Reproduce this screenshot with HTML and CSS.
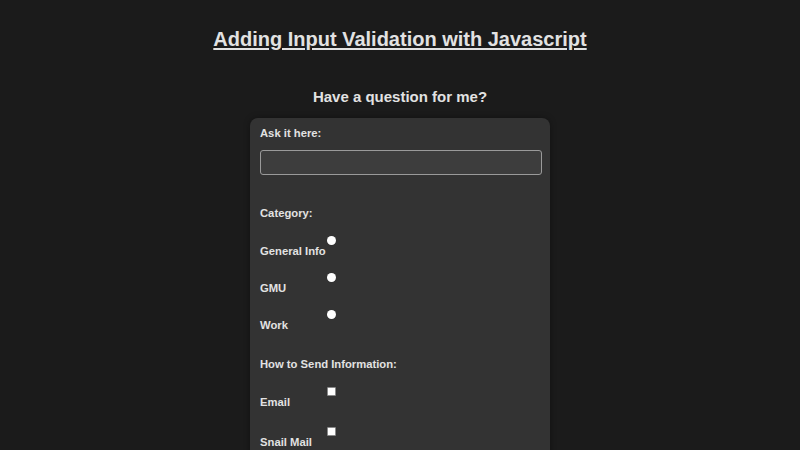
FILE: index.html
```html
<!DOCTYPE html>
<html lang="en">
<head>
<meta charset="utf-8">
<title>Adding Input Validation with Javascript</title>
<link rel="stylesheet" href="styles.css">
</head>
<body>
<header class="page-head">
  <h1 class="title">Adding Input Validation with Javascript</h1>
  <h2 class="subtitle">Have a question for me?</h2>
</header>
<form class="card">
  <label class="field-label" for="q">Ask it here:</label>
  <input class="text-input" id="q" type="text">

  <p class="group-label">Category:</p>
  <div class="option"><label for="c1">General Info</label><input class="radio" type="radio" name="cat" id="c1"></div>
  <div class="option"><label for="c2">GMU</label><input class="radio" type="radio" name="cat" id="c2"></div>
  <div class="option"><label for="c3">Work</label><input class="radio" type="radio" name="cat" id="c3"></div>

  <p class="group-label send">How to Send Information:</p>
  <div class="option check"><label for="s1">Email</label><input class="checkbox" type="checkbox" id="s1"></div>
  <div class="option check"><label for="s2">Snail Mail</label><input class="checkbox" type="checkbox" id="s2"></div>
</form>
</body>
</html>
```
FILE: styles.css
```css
html, body {
  margin: 0;
  padding: 0;
  background: #1b1b1b;
  color: #e2e2e2;
  font-family: "Liberation Sans", Arial, sans-serif;
  font-weight: bold;
}

body {
  display: flex;
  flex-direction: column;
  align-items: center;
  padding-top: 28px;
}

.page-head {
  display: flex;
  flex-direction: column;
  align-items: center;
}

.title {
  margin: 0;
  font-size: 20px;
  line-height: 23px;
  text-decoration: underline;
  text-decoration-thickness: 2px;
  text-underline-offset: 2px;
}

.subtitle {
  margin: 37px 0 0;
  font-size: 15px;
  line-height: 17px;
}

.card {
  margin-top: 13px;
  width: 280px;
  padding: 9px 10px 20px;
  background: #333333;
  border-radius: 8px;
  box-shadow: 0 0 6px rgba(0, 0, 0, 0.35);
  display: flex;
  flex-direction: column;
  align-items: flex-start;
  font-size: 11.25px;
  line-height: 13px;
}

.field-label {
  display: block;
}

.text-input {
  margin: 10px 0 0;
  width: 100%;
  height: 23px;
  padding: 0;
  border: 1px solid #9a9a9a;
  border-radius: 3px;
  background: #3d3d3d;
  color: #e2e2e2;
  box-sizing: content-box;
}

.group-label {
  margin: 32px 0 15.5px;
}

.group-label.send {
  margin: 10.6px 0 16.5px;
}

.option {
  display: flex;
  align-items: flex-start;
  margin-bottom: 15.3px;
}

.option label {
  width: 67px;
  padding-top: 9px;
}

.option.check {
  margin-bottom: 17.5px;
}

.radio, .checkbox {
  appearance: none;
  -webkit-appearance: none;
  margin: 0;
  width: 9px;
  height: 9px;
  background: #ffffff;
  border: none;
}

.radio {
  border-radius: 50%;
}

.checkbox {
  border: 1px solid #8a8a8a;
  border-radius: 1px;
  box-sizing: border-box;
}
```
